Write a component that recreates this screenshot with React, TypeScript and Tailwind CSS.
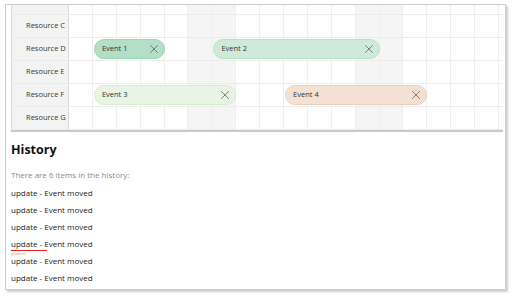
import React from 'react';
import { X } from 'lucide-react';

const COL_W = 23.9;
const COLS = 18;
const WEEKEND = [5, 6, 12, 13];

interface EventItem {
  text: string;
  start: number;
  end: number;
  bg: string;
}

const rows: { name: string; events: EventItem[] }[] = [
  { name: 'Resource C', events: [] },
  {
    name: 'Resource D',
    events: [
      { text: 'Event 1', start: 1, end: 4, bg: 'bg-[#b4dfc7] border-[#9fd4b7]' },
      { text: 'Event 2', start: 6, end: 13, bg: 'bg-[#cfeadb] border-[#b9e0c9]' },
    ],
  },
  { name: 'Resource E', events: [] },
  {
    name: 'Resource F',
    events: [
      { text: 'Event 3', start: 1, end: 7, bg: 'bg-[#e9f4e5] border-[#d8ecd3]' },
      { text: 'Event 4', start: 9, end: 15, bg: 'bg-[#f5e1d3] border-[#ecd0bc]' },
    ],
  },
  { name: 'Resource G', events: [] },
];

const Cells: React.FC = () => (
  <div className="absolute inset-0 flex">
    {Array.from({ length: COLS + 1 }).map((_, i) => (
      <div
        key={i}
        className={`h-full shrink-0 border-r border-[#efefef] ${WEEKEND.includes(i) ? 'bg-[#f5f5f5]' : ''}`}
        style={{ width: COL_W }}
      />
    ))}
  </div>
);

const Row: React.FC<{ name: string; events: EventItem[]; h: string }> = ({ name, events, h }) => (
  <div className={`flex ${h} border-b border-[#ececec]`}>
    <div className="w-[58px] shrink-0 flex items-center pl-[14px] bg-[#f3f3f3] border-l border-r border-[#d9d9d9] text-[7.5px] text-[#3a3a3a]">
      {name}
    </div>
    <div className="relative flex-1 overflow-hidden">
      <Cells />
      {events.map((ev) => (
        <div
          key={ev.text}
          className={`absolute top-[1px] bottom-[1px] flex items-center justify-between rounded-full border pl-[7px] pr-[3px] text-[7.5px] text-[#333] ${ev.bg}`}
          style={{ left: ev.start * COL_W + 1, width: (ev.end - ev.start) * COL_W - 1 }}
        >
          <span>{ev.text}</span>
          <X className="w-[14px] h-[14px] text-[#555]" strokeWidth={1.2} />
        </div>
      ))}
    </div>
  </div>
);

export default function App() {
  const history = Array.from({ length: 6 });
  return (
    <div
      className="w-[512px] h-[296px] bg-white pl-[5px] pt-[4px]"
      style={{ fontFamily: '"Open Sans", "Noto Sans", sans-serif' }}
    >
      <div className="w-[501px] h-[286px] border border-[#cdcdcd] shadow-[2px_2px_2px_rgba(0,0,0,0.2)] overflow-hidden bg-white pl-[5px] pr-[2px]">
        <div className="border-b-2 border-[#c9c9c9]">
          <Row name="" events={[]} h="h-[9.5px]" />
          {rows.map((r) => (
            <Row key={r.name} name={r.name} events={r.events} h="h-[23.1px]" />
          ))}
        </div>
        <h2 className="mt-[10px] text-[12.5px] font-bold text-[#111] leading-[16px]">History</h2>
        <div className="mt-[8px] text-[8px] text-[#8a8a8a] leading-[17px]">There are 6 items in the history:</div>
        <div className="mt-[1px] text-[8px] text-[#222] leading-[17px]">
          {history.map((_, i) => (
            <div key={i} className="relative">
              {i === 3 ? (
                <>
                  <span>update - </span>Event moved
                  <div className="absolute left-0 top-[15px] w-[36px] h-[1px] bg-[#e02020]" />
                  <div className="absolute left-0 top-[16px] text-[4px] leading-[5px] text-[#e0904a]">position</div>
                </>
              ) : (
                'update - Event moved'
              )}
            </div>
          ))}
        </div>
      </div>
    </div>
  );
}
